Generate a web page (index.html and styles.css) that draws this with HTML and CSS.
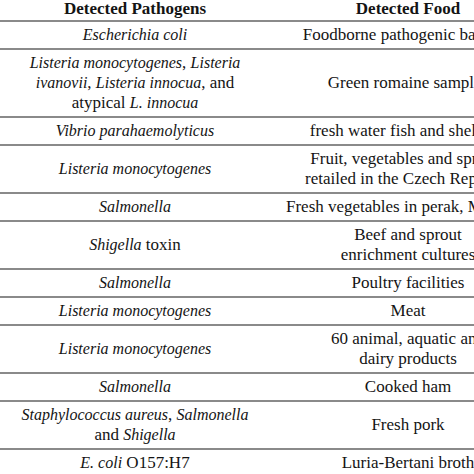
FILE: index.html
```html
<!DOCTYPE html>
<html>
<head>
<meta charset="utf-8">
<link rel="stylesheet" href="styles.css">
</head>
<body>
<div class="frame">
<table class="tbl">
  <colgroup><col class="c1"><col class="c2"></colgroup>
  <thead>
    <tr><th>Detected Pathogens</th><th>Detected Food</th></tr>
  </thead>
  <tbody>
    <tr><td><i>Escherichia coli</i></td><td>Foodborne pathogenic bacteria</td></tr>
    <tr><td><i>Listeria monocytogenes</i>, <i>Listeria</i><br><i>ivanovii</i>, <i>Listeria innocua</i>, and<br>atypical <i>L. innocua</i></td><td>Green romaine samples</td></tr>
    <tr><td><i>Vibrio parahaemolyticus</i></td><td>fresh water fish and shellfish</td></tr>
    <tr><td><i>Listeria monocytogenes</i></td><td>Fruit, vegetables and sprouts<br>retailed in the Czech Republic</td></tr>
    <tr><td><i>Salmonella</i></td><td>Fresh vegetables in perak, Malaysia</td></tr>
    <tr><td><i>Shigella</i> toxin</td><td>Beef and sprout<br>enrichment cultures</td></tr>
    <tr><td><i>Salmonella</i></td><td>Poultry facilities</td></tr>
    <tr><td><i>Listeria monocytogenes</i></td><td>Meat</td></tr>
    <tr><td><i>Listeria monocytogenes</i></td><td>60 animal, aquatic and<br>dairy products</td></tr>
    <tr><td><i>Salmonella</i></td><td>Cooked ham</td></tr>
    <tr><td><i>Staphylococcus aureus</i>, <i>Salmonella</i><br>and <i>Shigella</i></td><td>Fresh pork</td></tr>
    <tr><td><i>E. coli</i> O157:H7</td><td>Luria-Bertani broth</td></tr>
  </tbody>
</table>
</div>
</body>
</html>
```
FILE: styles.css
```css
html, body {
  margin: 0;
  padding: 0;
  background: #fff;
  overflow: hidden;
}
.frame {
  width: 474px;
  height: 474px;
  overflow: hidden;
}
.tbl {
  margin-top: -6px;
  width: 546px;
  border-collapse: collapse;
  table-layout: fixed;
  font-family: "Liberation Serif", "Times New Roman", serif;
  font-size: 17px;
  line-height: 20px;
  color: #141414;
}
.c1 { width: 270px; }
.c2 { width: 276px; }
.tbl th, .tbl td {
  padding: 3px 4px;
  text-align: center;
  vertical-align: middle;
  white-space: nowrap;
  border-bottom: 2px solid #8a8a8a;
}
.tbl th {
  font-weight: bold;
  padding: 5px 4px 1px;
}
.tbl i {
  font-size: 16px;
}
```
